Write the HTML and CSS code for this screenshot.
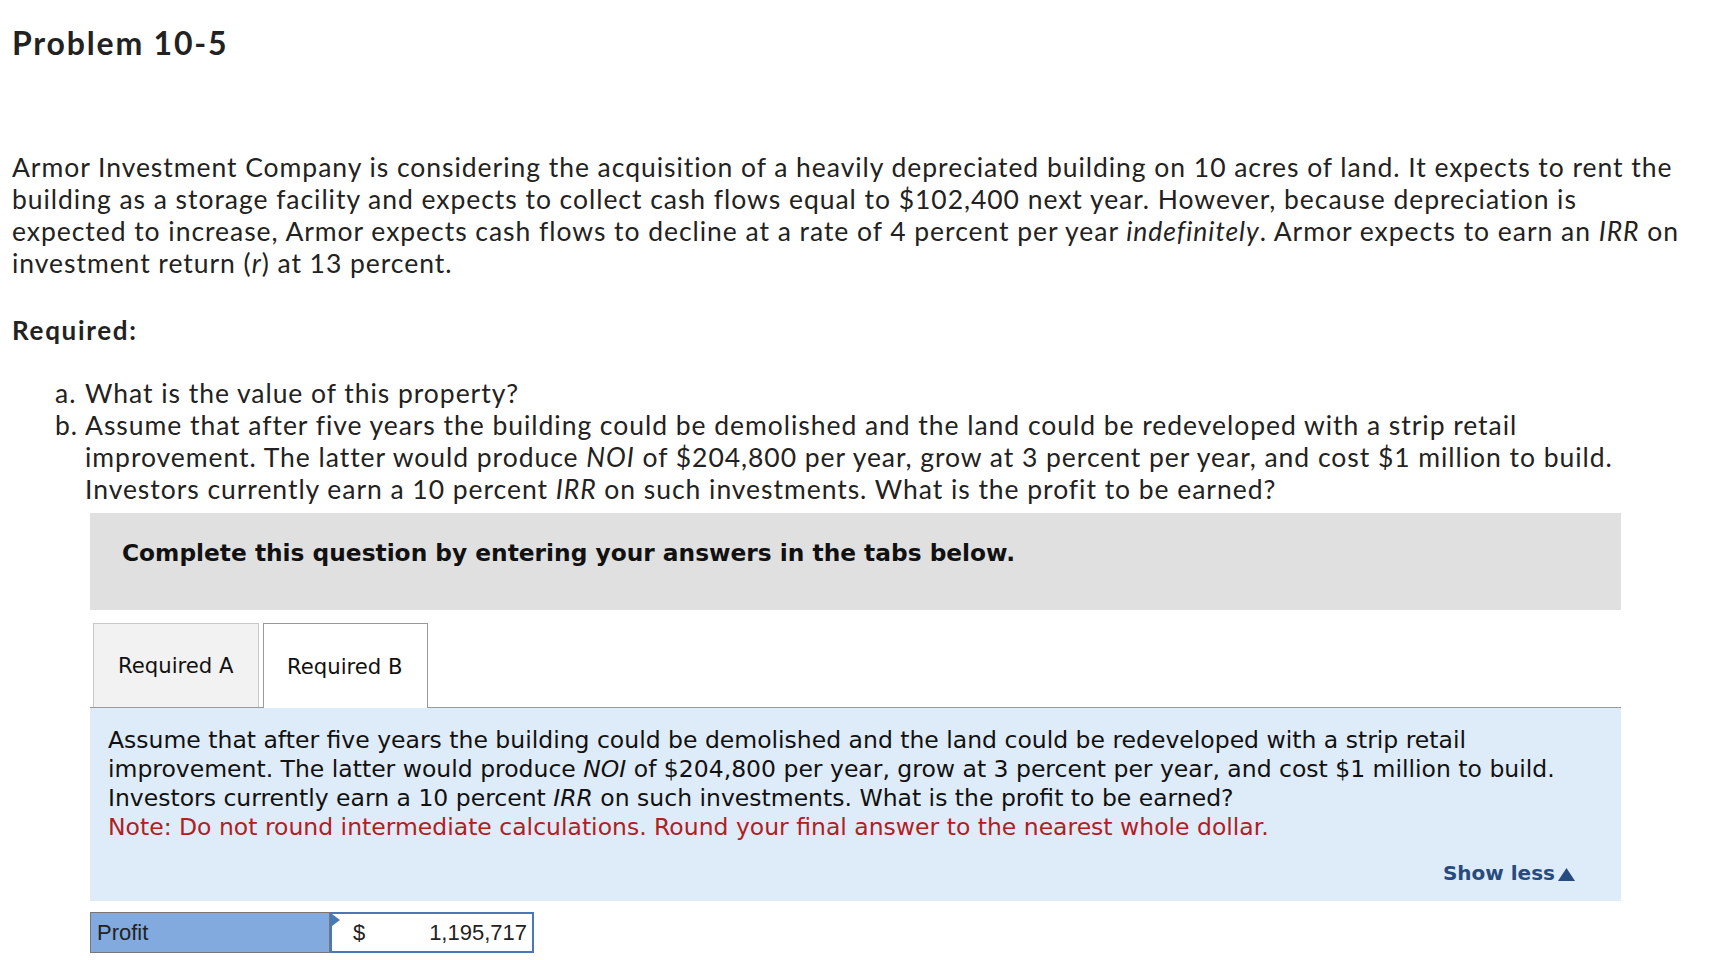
FILE: index.html
```html
<!DOCTYPE html>
<html lang="en">
<head>
<meta charset="utf-8">
<title>Problem 10-5</title>
<link rel="stylesheet" href="styles.css">
</head>
<body>
<div class="page">
  <h1 class="title">Problem 10-5</h1>
  <p class="intro">Armor Investment Company is considering the acquisition of a heavily depreciated building on 10 acres of land. It expects to rent the building as a storage facility and expects to collect cash flows equal to $102,400 next year. However, because depreciation is<br>expected to increase, Armor expects cash flows to decline at a rate of 4 percent per year <i>indefinitely</i>. Armor expects to earn an <i>IRR</i> on investment return (<i>r</i>) at 13 percent.</p>
  <h2 class="req">Required:</h2>
  <div class="parts">
    <div class="part"><span class="mark">a.</span><span>What is the value of this property?</span></div>
    <div class="part"><span class="mark">b.</span><span>Assume that after five years the building could be demolished and the land could be redeveloped with a strip retail improvement. The latter would produce <i>NOI</i> of $204,800 per year, grow at 3 percent per year, and cost $1 million to build. Investors currently earn a 10 percent <i>IRR</i> on such investments. What is the profit to be earned?</span></div>
  </div>
  <div class="block">
    <div class="instr">Complete this question by entering your answers in the tabs below.</div>
    <div class="tabs">
      <div class="tab">Required A</div>
      <div class="tab active">Required B</div>
    </div>
    <div class="panel">
      <p class="ptext">Assume that after five years the building could be demolished and the land could be redeveloped with a strip retail improvement. The latter would produce <i>NOI</i> of $204,800 per year, grow at 3 percent per year, and cost $1 million to build. Investors currently earn a 10 percent <i>IRR</i> on such investments. What is the profit to be earned?<br><span class="note">Note: Do not round intermediate calculations. Round your final answer to the nearest whole dollar.</span></p>
      <div class="showless">Show less<svg class="tri" width="17" height="13" viewBox="0 0 17 13"><polygon points="8.5,0 17,13 0,13" fill="#274b7e"/></svg></div>
    </div>
    <div class="answer">
      <div class="label">Profit</div>
      <div class="input"><span class="flag"></span><span class="cur">$</span><span class="val">1,195,717</span></div>
    </div>
  </div>
</div>
</body>
</html>
```
FILE: styles.css
```css
* { box-sizing: border-box; }
html, body { margin: 0; padding: 0; background: #fff; }
body { font-family: "Lato", "Open Sans", sans-serif; color: #222; }
.page { padding: 23px 0 0 12px; }
.title { margin: 0; font-size: 32px; line-height: 40px; font-weight: 700; letter-spacing: 1.8px; color: #222; }
.intro { margin: 88px 0 0; font-size: 26.5px; line-height: 32px; letter-spacing: 0.96px; }
.req { margin: 35px 0 0; font-size: 26px; line-height: 32px; font-weight: 700; letter-spacing: 1.7px; }
.parts { margin: 31px 70px 0 43px; font-size: 26.5px; line-height: 32px; letter-spacing: 0.96px; }
.part { display: grid; grid-template-columns: 30px 1fr; }
.block { margin: 8px 0 0 78px; width: 1531px; font-family: "DejaVu Sans", Verdana, sans-serif; }
.instr { background: #e0e0e0; height: 97px; padding: 26px 32px 0; font-size: 23.3px; line-height: 28px; font-weight: 700; color: #111; }
.tabs { display: flex; gap: 4px; margin-top: 13px; padding-left: 3px; }
.tab { height: 84px; display: flex; align-items: center; font-size: 21.2px; color: #111; border: 1px solid #c8c8c8; border-bottom: none; background: #f2f2f2; }
.tab:first-child { width: 166px; padding-left: 24px; }
.tab.active { width: 165px; padding-left: 23px; background: #fff; border-color: #9a9a9a; height: 85px; margin-bottom: -1px; position: relative; }
.panel { background: #deebf8; border-top: 1px solid #9a9a9a; padding: 18px 46px 13px 18px; }
.ptext { margin: 0; font-size: 23.5px; line-height: 29px; color: #111; }
.note { color: #b0201f; }
.showless { margin-top: 17px; display: flex; justify-content: flex-end; align-items: baseline; gap: 3px; font-size: 20px; line-height: 29px; font-weight: 700; color: #274b7e; }
.tri { display: block; align-self: center; margin-top: 2px; }
.answer { display: flex; margin-top: 11px; height: 41px; font-family: "Liberation Sans", Arial, sans-serif; font-size: 22px; color: #222; }
.label { width: 240px; background: #82aadf; border: 1px solid #777; display: flex; align-items: center; padding-left: 6px; }
.input { width: 204px; border: 2px solid #4a78b4; background: #fff; display: flex; align-items: center; justify-content: space-between; padding: 0 5px 0 21px; position: relative; }
.flag { position: absolute; left: 0; top: 0; width: 0; height: 0; border-top: 6px solid transparent; border-bottom: 6px solid transparent; border-left: 8px solid #4a78b4; }
```
